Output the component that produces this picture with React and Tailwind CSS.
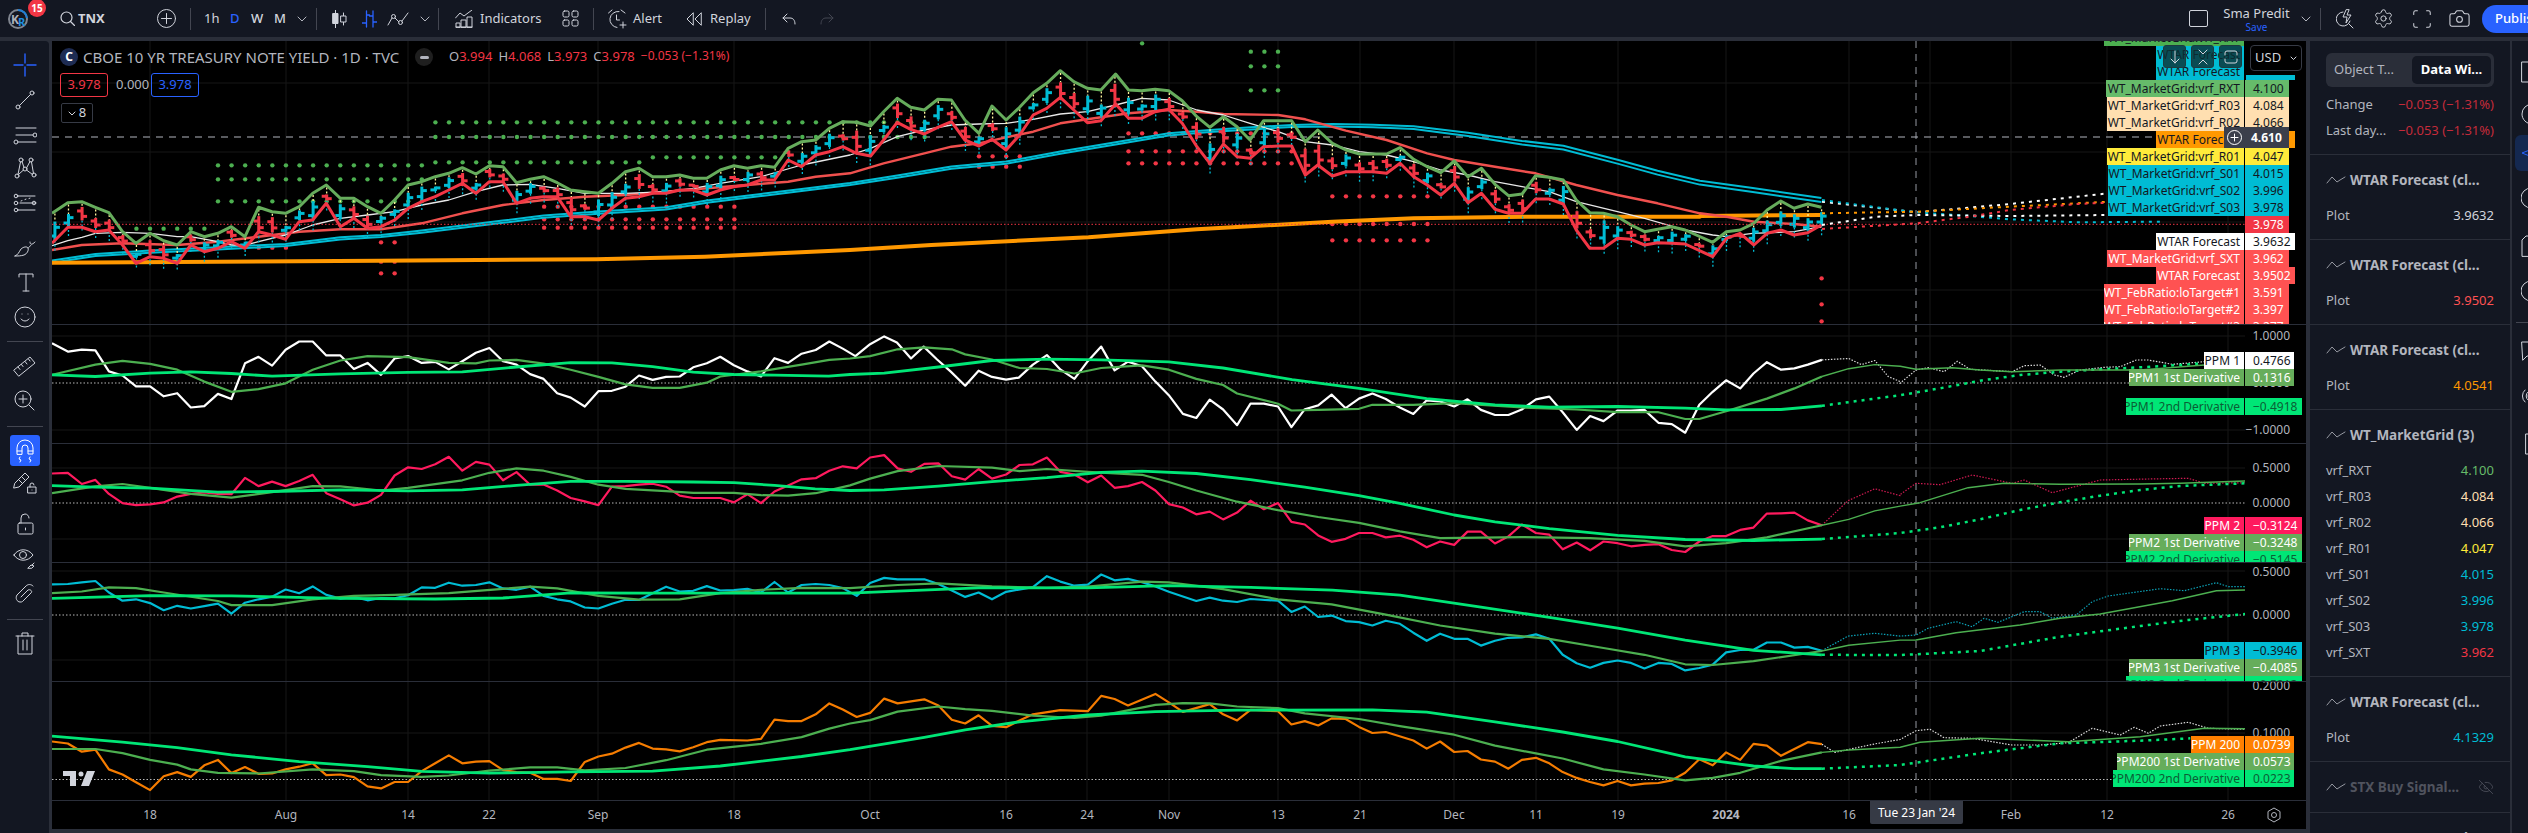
import React from 'react';
import { Settings, Camera, Scan, EyeOff, Smile } from 'lucide-react';

const Z1 = (x, y) => [x / 1.845, y / 3];
const Z2 = (x, y) => [850 + x / 1.845, y / 3];
const Z3 = (x, y) => [1700 + x / 1.894, y / 3];
const Z5 = (x, y) => [x / 1.845, 300 + y / 2.94];
const Z6 = (x, y) => [850 + x / 1.493, 300 + y / 2.94];
const Z4 = (x, y) => [1900 + x / 2.497, 320 + y / 3];
const Z7 = (x, y) => [1810 + x / 3, 180 + y / 3];
const P = (s, f) => s.trim().split(/\s+/).map((t) => { const [a, b] = t.split(',').map(Number); return f(a, b); });
const str = (a) => a.map((p) => p[0].toFixed(1) + ',' + p[1].toFixed(1)).join(' ');
const at = (a, x) => {
  for (let i = 1; i < a.length; i++) {
    if (x <= a[i][0]) {
      const t = (x - a[i - 1][0]) / Math.max(a[i][0] - a[i - 1][0], 0.01);
      return a[i - 1][1] + Math.max(0, t) * (a[i][1] - a[i - 1][1]);
    }
  }
  return a[a.length - 1][1];
};
const L = ({ p, c, w = 2, dash }) => (
  <polyline points={str(p)} fill="none" stroke={c} strokeWidth={w} strokeLinejoin="round" strokeDasharray={dash} />
);

const BX = (i) => 54.9 + 13.59 * i;
const GRIDX = [150, 286, 408, 489, 598, 734, 870, 1006, 1087, 1169, 1278, 1360, 1454, 1536, 1618, 1726, 1849, 1930, 2011, 2107, 2228];

/* ---------- main pane data ---------- */
const upper = [
  ...P('96,640 125,608 151,605 176,622 201,638 226,695 251,730 277,700 302,722 327,735 352,695 377,710 402,700 427,680 452,710 477,622 502,635 527,640 552,620 577,580 602,555 628,595 653,595 678,620 703,640 728,600 753,555 778,545 803,530 828,520 853,503 878,522 903,497 928,500 953,548 978,538 1003,530 1028,548 1053,570 1079,575 1104,580 1129,550 1154,515 1179,505 1204,530 1229,530 1254,525 1279,535 1304,535 1329,510 1354,497 1379,505 1404,497 1429,502 1454,445 1479,425 1505,420 1530,385 1555,365', Z1),
  ...P('12,367 38,378 62,335 87,295 112,322 137,330 162,298 187,300 212,360 238,400 262,318 288,360 313,322 338,278 363,250 388,212 413,245 438,265 463,270 490,222 514,270 538,272 563,268 588,272 613,302 640,350 664,382 689,350 714,380 738,420 763,362 790,362 815,362 840,425 863,390 890,430 915,450 940,462 965,462 990,462 1015,443 1040,478 1065,500 1090,518 1115,483 1140,530 1165,505 1190,553 1215,587 1240,582 1265,527 1290,532 1316,540 1340,600 1365,638 1390,640 1416,650 1441,675 1466,695 1490,688 1516,680 1541,690', Z2),
  ...P('24,727 50,695 76,690 102,670 127,630 153,603 178,625 204,612 230,622', Z3),
];
const lower = [
  ...P('96,730 125,682 151,682 176,695 201,690 226,735 251,790 277,770 302,775 327,790 352,735 377,755 402,745 427,725 452,745 477,695 502,705 527,718 552,665 577,660 602,610 628,680 653,655 678,685 703,680 728,660 753,625 778,605 803,590 828,570 853,550 878,580 903,545 928,545 953,610 978,595 1003,590 1028,590 1053,650 1079,650 1104,660 1129,625 1154,595 1179,590 1204,580 1229,580 1254,570 1279,570 1304,585 1329,570 1354,560 1379,555 1404,540 1429,540 1454,480 1479,500 1505,465 1530,455 1555,440', Z1),
  ...P('12,460 38,468 62,420 87,367 112,388 137,402 162,382 187,365 212,420 238,438 262,418 288,450 313,405 338,345 363,325 388,292 413,330 438,368 463,362 490,312 514,355 538,355 563,335 588,328 613,370 640,440 664,490 689,432 714,470 738,475 763,440 790,438 815,438 840,525 863,495 890,528 915,515 940,515 965,515 990,520 1015,490 1040,530 1065,555 1090,585 1115,550 1140,608 1165,580 1190,628 1215,640 1240,640 1265,597 1290,597 1316,612 1340,690 1365,745 1390,745 1416,715 1441,718 1466,735 1490,728 1516,730 1541,732', Z2),
  ...P('24,770 50,715 76,700 102,735 127,700 153,690 178,705 204,698 230,675', Z3),
];
const whiteMA = [
  ...P('96,737 125,722 151,712 176,700 226,697 277,700 327,710 352,710 402,725 427,735 452,735 477,725 527,705 577,675 628,655 678,645 728,635 778,615 828,600 878,575 928,555 978,553 1028,565 1079,580 1154,580 1229,575 1279,565 1329,550 1404,530 1479,495', Z1),
  ...P('0,465 38,445 87,410 137,390 187,375 238,372 288,370 338,358 388,342 438,335 490,315 538,295 588,300 640,330 689,345 738,370 790,395 840,425 890,435 940,455 990,465 1040,485 1090,510 1140,525 1190,545 1240,560 1290,575 1340,605 1416,635 1466,655 1541,690', Z2),
  ...P('24,705 50,710 100,700 178,695 230,680', Z3),
];
const redMA = [
  ...P('96,750 151,735 226,730 327,735 402,725 477,710 552,695 628,688 703,688 778,670 853,640 928,615 1003,600 1079,590 1154,585 1229,575 1304,565 1379,555 1454,545 1505,530', Z1),
  ...P('0,520 62,490 137,460 187,440 238,430 288,412 338,395 388,370 438,358 514,340 588,330 640,335 689,342 790,345 840,358 915,392 990,420 1065,460 1115,480 1190,500 1265,520 1340,555 1416,585 1490,610 1568,640', Z2),
  ...P('50,650 102,665 178,672 230,680', Z3),
];
const cyanMA = [
  ...P('96,785 176,765 277,755 402,745 527,735 628,715 703,708 778,695 853,680 928,665 1003,650 1104,638 1229,625 1304,605 1404,585 1479,570', Z1),
  ...P('0,552 87,530 187,503 288,488 388,458 490,430 588,403 664,393 740,385 815,378 890,376 965,378 1040,383 1140,403 1240,428 1316,443 1416,485 1490,518 1568,548', Z2),
  ...P('100,570 230,600', Z3),
];
const orangeMA = [
  ...P('96,788 400,785 700,782 1100,778 1300,770', Z1),
  ...P('0,750 150,735 440,712 640,688 890,665 1040,655 1265,650 1568,650', Z2),
  ...P('0,648 230,645', Z3),
];
const spread = (a, s) => a.map((p) => [p[0], p[1] + s * (1 + 0.8 * Math.min(1, Math.max(0, (p[0] - 1300) / 300)))]);

const COLORS = 'ccrrrrcrrcrccrcrrcccrcrrccccccrcrrccrrrrcccrrcrrccrcrcrcccr' + 'rccrrccrrcrccccrrccrcccrrrcrcrcrrrrrcrrrcrcrrccrrrrccrrccrrcccrccr';
const Bars = () => {
  const out = [];
  for (let i = 0; i <= 130; i++) {
    const x = BX(i);
    const g = at(upper, x);
    const r = at(lower, x);
    const gap = Math.max(r - g, 10);
    const v1 = 0.5 + 0.5 * Math.sin(i * 2.3);
    const v2 = 0.5 + 0.5 * Math.sin(i * 1.7 + 1);
    const top = g + gap * (0.2 + 0.3 * v1);
    const bot = g + gap * (0.72 + 0.32 * v2);
    const up = (COLORS[i] || 'c') === 'c';
    const col = up ? '#00bcd4' : '#f23645';
    const o = up ? top + (bot - top) * 0.75 : top + (bot - top) * 0.3;
    const cl = up ? top + (bot - top) * 0.3 : top + (bot - top) * 0.7;
    out.push(
      <g key={i}>
        <line x1={x} x2={x} y1={g + 2} y2={top} stroke="#fff59d" strokeWidth="1.3" strokeDasharray="2 2" />
        <line x1={x} x2={x} y1={bot} y2={bot + 12} stroke="#00bcd4" strokeWidth="1.3" strokeDasharray="2 2" />
        <line x1={x} x2={x} y1={top} y2={bot} stroke={col} strokeWidth="3" />
        <line x1={x - 5} x2={x} y1={o} y2={o} stroke={col} strokeWidth="3" />
        <line x1={x} x2={x + 5} y1={cl} y2={cl} stroke={col} strokeWidth="3" />
      </g>
    );
  }
  return <g>{out}</g>;
};

const dotRow = (y, a, b, c) => {
  const r = [];
  for (let i = a; i <= b; i++) r.push([BX(i), y / 3, c]);
  return r;
};
const G = '#4caf50';
const R = '#f23645';
const DOTS = [
  ...dotRow(367, 28, 64, G), ...dotRow(411, 28, 64, G), ...dotRow(487, 28, 43, G), ...dotRow(472, 44, 53, G),
  ...dotRow(496, 12, 27, G), ...dotRow(538, 12, 27, G), ...dotRow(604, 12, 27, G), ...dotRow(686, 6, 11, G),
  ...dotRow(130, 80, 80, G), ...dotRow(155, 88, 90, G), ...dotRow(199, 88, 90, G), ...dotRow(271, 88, 90, G),
  ...dotRow(620, 36, 50, R), ...dotRow(658, 36, 50, R), ...dotRow(683, 36, 50, R),
  ...dotRow(727, 24, 25, R), ...dotRow(785, 24, 25, R), ...dotRow(820, 24, 25, R),
  ...dotRow(743, 15, 17, R),
  ...dotRow(469, 68, 71, R), ...dotRow(500, 68, 71, R),
  ...dotRow(400, 79, 91, R), ...dotRow(454, 79, 91, R), ...dotRow(490, 79, 91, R),
  ...dotRow(589, 94, 101, R), ...dotRow(672, 94, 101, R), ...dotRow(721, 94, 101, R),
  ...dotRow(835, 130, 130, R), ...dotRow(913, 130, 130, R), ...dotRow(964, 130, 130, R),
];

const Grid = ({ ys, top, bottom }) => (
  <g>
    {GRIDX.map((x) => <line key={x} x1={x} x2={x} y1={top} y2={bottom} stroke="#171717" />)}
    {ys.map((y) => <line key={y} x1={52} x2={2245} y1={y} y2={y} stroke="#171717" />)}
    <line x1={1916} x2={1916} y1={top} y2={bottom} stroke="#9598a1" strokeDasharray="7 6" />
  </g>
);

const MainSvg = () => (
  <svg className="block h-[283px] w-[2193px] shrink-0" viewBox="52 41 2193 283">
    <Grid ys={[83, 152, 222, 290]} top={41} bottom={324} />
    <line x1={52} x2={2245} y1={137} y2={137} stroke="#b2b5be" strokeDasharray="7 6" />
    {DOTS.map((d, i) => <circle key={i} cx={d[0]} cy={d[1]} r="2.2" fill={d[2]} />)}
    <L p={spread(cyanMA, -1.1)} c="#00bcd4" w={2} />
    <L p={spread(cyanMA, 1.1)} c="#00bcd4" w={2} />
    <L p={orangeMA} c="#ff9800" w={4} />
    <L p={redMA} c="#f0504e" w={2.4} />
    <L p={whiteMA} c="#e8e8e8" w={1.3} />
    <Bars />
    <L p={upper} c="#66ac5c" w={3} />
    <L p={lower} c="#f23645" w={3} />
    <line x1={52} x2={2245} y1={224.3} y2={224.3} stroke="#f23645" strokeDasharray="1.5 2" />
    <L p={P('36,65 320,97 600,72 895,40', Z7)} c="#ffffff" w={2} dash="3 5" />
    <L p={P('36,60 200,82 320,97 480,108 600,118 800,127 1050,125', Z7)} c="#00bcd4" w={2} dash="3 5" />
    <L p={P('36,100 320,95 600,80 895,65', Z7)} c="#ff9800" w={2} dash="3 5" />
    <L p={P('36,135 200,110 320,105 600,108 895,105', Z7)} c="#ffffff" w={2} dash="3 5" />
    <L p={P('36,147 320,130 480,110 600,90 800,72 895,68', Z7)} c="#f23645" w={2} dash="3 5" />
  </svg>
);

/* ---------- lower panes data ---------- */
const PANES = [
  {
    top: 325, zero: 383, ys: [336, 430], c: '#ffffff',
    line: [...P('96,127 126,152 151,146 176,148 201,210 226,222 251,254 277,254 302,283 327,274 352,316 377,312 402,276 427,291 452,186 477,167 502,193 527,146 552,122 577,122 602,163 628,163 653,203 678,185 703,220 728,172 753,165 778,185 803,182 828,204 853,180 878,155 903,141 928,180 953,190 978,218 1003,232 1028,274 1053,287 1079,313 1104,268 1129,267 1154,255 1179,222 1204,235 1229,226 1254,225 1279,198 1304,186 1329,167 1354,192 1379,210 1404,225 1429,171 1454,185 1479,158 1505,147 1530,122 1555,143', Z5),
      ...P('8,165 30,130 51,107 70,125 91,172 110,137 130,175 150,210 172,252 192,208 212,226 233,234 252,228 273,190 294,162 314,204 335,232 355,180 375,137 395,207 415,181 436,195 456,240 476,280 497,335 517,347 537,293 557,322 578,368 598,305 618,305 639,313 659,374 679,321 699,310 719,278 740,318 760,290 780,275 800,291 821,316 841,335 861,295 881,298 902,313 922,292 942,323 963,338 983,338 1003,322 1024,292 1044,284 1064,330 1085,382 1105,341 1125,356 1146,325 1166,325 1186,323 1207,361 1227,365 1247,390 1268,308 1288,270 1308,236 1329,260 1349,216 1369,183 1390,205 1410,201 1430,190 1451,176', Z6)],
    mid: [...P('96,220 176,190 226,179 277,188 327,205 377,240 427,270 477,262 527,245 577,205 628,178 678,165 753,168 828,185 878,186 903,178 953,176 1003,187 1053,205 1104,226 1154,248 1204,258 1254,258 1304,243 1329,225 1404,210 1479,190 1530,176', Z5),
      ...P('0,172 30,165 71,145 111,139 152,145 172,160 212,175 253,200 294,203 335,216 375,200 436,192 476,205 517,232 557,250 578,275 639,305 659,325 699,323 760,320 780,308 841,308 902,303 1003,316 1085,322 1146,330 1207,330 1247,350 1268,350 1308,327 1369,290 1410,260 1451,225', Z6)],
    midF: [...P('1451,225 1491,202 1530,190 1568,195', Z6), ...P('40,148 130,143 200,150 280,155 400,150 600,150 760,135', Z4)],
    slow: [...P('96,220 176,225 277,215 352,211 427,216 502,224 628,217 753,213 853,211 953,197 1053,184 1129,185 1204,196 1279,212 1354,219 1429,221 1529,224', Z5),
      ...P('0,219 51,215 132,197 212,178 294,174 375,176 476,182 557,200 660,234 760,260 861,290 963,308 1044,315 1146,313 1247,318 1308,323 1390,322 1451,311', Z6)],
    slowF: [...P('1451,311 1568,280', Z6), ...P('100,205 200,182 300,165 400,155 500,148 600,142 700,135 755,130', Z4)],
    thin: [...P('1451,176 1491,172 1510,190 1530,178 1550,225 1568,240', Z6), ...P('0,190 40,150 70,143 110,155 143,124 175,148 280,155 310,137 350,135 385,165 410,172 450,150 510,142 550,140 590,120 620,120 680,133 760,125', Z4)],
    thinC: '#dcdcdc',
  },
  {
    top: 444, zero: 503, ys: [468, 539], c: '#ff1a5e',
    line: [...P('96,510 125,508 151,541 176,529 201,570 226,597 251,603 277,601 302,595 327,578 352,570 377,566 402,570 427,571 452,523 477,547 502,534 527,547 552,532 577,514 602,568 628,586 653,604 678,596 703,573 728,516 753,492 778,497 803,483 828,461 853,502 878,476 903,484 928,530 953,506 978,543 1003,542 1028,560 1053,582 1079,592 1104,603 1129,549 1154,547 1179,543 1204,540 1229,549 1254,575 1279,582 1304,582 1329,582 1354,595 1379,571 1404,597 1429,563 1454,545 1479,527 1505,524 1530,502 1555,489', Z5),
      ...P('10,495 30,463 51,456 71,495 91,505 111,482 132,480 152,518 172,528 192,497 212,525 233,513 253,485 273,483 294,463 314,505 335,513 355,536 375,516 395,552 415,547 436,535 456,560 476,600 497,610 517,630 537,622 557,645 578,625 598,590 618,615 639,597 659,652 679,660 699,692 719,711 740,702 760,685 780,685 800,698 821,693 841,705 861,727 881,710 902,720 922,681 942,681 963,716 983,695 1003,660 1024,685 1044,690 1064,733 1085,713 1105,736 1125,710 1146,715 1166,724 1186,720 1207,718 1227,735 1247,741 1268,710 1288,694 1308,694 1329,676 1349,669 1369,628 1390,627 1410,625 1430,648 1451,662', Z6)],
    mid: [...P('96,568 176,548 226,541 277,552 352,570 427,581 502,565 577,547 628,548 703,560 753,552 853,530 903,508 953,495 1003,502 1053,520 1104,543 1154,555 1229,562 1279,567 1354,567 1404,574 1454,575 1505,568', Z5),
      ...P('0,545 30,525 71,503 132,488 212,493 253,503 294,497 355,505 436,514 476,535 517,560 578,593 639,618 699,638 760,655 821,680 881,700 1003,697 1105,700 1186,708 1247,724 1308,715 1369,698 1451,662', Z6)],
    midF: [...P('1451,662 1491,645 1530,620 1568,606', Z6), ...P('50,548 170,503 260,490 400,493 600,492 700,490 862,483', Z4)],
    slow: [...P('96,546 176,550 277,553 402,565 502,563 628,558 753,561 853,558 953,545 1053,533 1154,533 1279,535 1354,537 1429,545 1504,555', Z5),
      ...P('0,560 51,558 132,547 212,534 294,522 375,507 436,503 517,510 598,528 679,550 760,575 821,598 902,632 963,652 1044,672 1146,692 1247,704 1349,707 1451,703', Z6)],
    slowF: [...P('1451,703 1568,685', Z6), ...P('100,622 200,598 300,570 400,547 500,527 600,510 700,498 860,490', Z4)],
    thin: [...P('1451,662 1490,590 1530,555 1568,575', Z6), ...P('0,524 40,490 100,494 180,465 280,490 310,480 380,518 500,480 620,477 720,475 760,490 862,488', Z4)],
    thinC: '#d01a52',
  },
  {
    top: 563, zero: 615, ys: [571, 660], c: '#00bcd4',
    line: [...P('96,836 125,835 151,830 176,826 201,860 226,884 251,880 277,891 302,912 327,899 352,907 377,900 402,893 427,922 452,890 477,880 502,872 527,851 552,862 577,842 602,867 628,878 653,873 678,883 703,876 728,877 753,868 778,845 803,846 828,831 853,840 878,838 903,830 928,848 953,852 978,843 1003,870 1028,880 1053,886 1079,904 1104,907 1129,893 1154,881 1179,882 1204,862 1229,843 1254,857 1279,855 1304,841 1329,854 1354,853 1379,849 1404,860 1429,829 1454,860 1479,838 1505,835 1530,838 1555,847', Z5),
      ...P('10,870 30,832 51,817 71,821 111,821 132,835 172,873 192,860 212,880 233,858 273,844 294,812 314,828 335,840 355,837 375,807 395,824 415,820 436,830 456,842 476,858 517,885 537,875 557,884 578,888 598,879 639,884 659,917 679,901 699,932 719,928 740,944 760,947 780,957 800,943 821,952 841,978 861,1002 881,981 902,996 922,996 942,1016 963,1002 983,993 1003,992 1024,983 1044,996 1064,1043 1085,1068 1105,1081 1125,1067 1146,1060 1166,1067 1186,1083 1207,1067 1227,1070 1247,1089 1268,1082 1288,1072 1308,1036 1329,1029 1349,1028 1369,1007 1390,1007 1410,1022 1430,1020 1451,1031', Z6)],
    mid: [...P('96,862 151,857 201,845 251,847 302,860 402,885 427,897 502,897 577,880 653,870 728,867 828,862 928,849 978,843 1028,848 1104,870 1179,881 1254,880 1329,862 1404,852 1479,846', Z5),
      ...P('0,847 71,838 132,833 212,842 294,846 355,843 436,828 476,830 557,850 639,880 719,895 800,925 881,957 963,981 1044,996 1125,1023 1186,1043 1247,1071 1288,1073 1349,1062 1451,1032', Z6)],
    midF: [...P('1451,1032 1491,1015 1568,1000', Z6), ...P('40,960 140,938 300,915 400,895 500,882 680,842 790,812 862,810', Z4)],
    slow: [...P('96,877 277,869 427,870 628,877 803,879 928,876 1053,861 1204,862 1404,862', Z5),
      ...P('0,862 71,856 192,846 355,846 476,840 598,845 720,853 821,868 942,903 1044,933 1146,965 1247,1000 1349,1030 1451,1043', Z6)],
    slowF: [...P('1451,1043 1568,1044', Z6), ...P('200,993 400,950 600,918 720,900 862,882', Z4)],
    thin: [...P('1451,1031 1490,988 1530,980 1568,988', Z6), ...P('40,945 70,925 140,905 180,920 210,895 245,907 310,875 350,875 380,895 440,885 480,845 520,828 650,806 710,812 790,788 820,800 862,800', Z4)],
    thinC: '#0ba3b8',
  },
  {
    top: 682, zero: 779.5, ys: [733], c: '#f57c00',
    line: [...P('96,1298 125,1304 151,1328 176,1322 201,1380 226,1395 251,1418 277,1441 302,1400 327,1388 352,1402 377,1368 402,1352 427,1391 452,1373 477,1393 502,1392 527,1380 552,1372 577,1362 602,1397 628,1395 653,1403 678,1430 703,1436 728,1417 753,1417 778,1385 803,1362 828,1339 853,1362 878,1357 903,1356 928,1382 953,1388 978,1390 1003,1408 1028,1408 1053,1414 1079,1358 1104,1342 1129,1334 1154,1316 1179,1302 1204,1319 1229,1321 1254,1327 1279,1315 1304,1300 1329,1293 1379,1295 1404,1290 1429,1234 1454,1238 1479,1238 1505,1218 1530,1186 1555,1204', Z5),
      ...P('10,1226 30,1214 51,1172 71,1186 111,1174 132,1192 152,1234 172,1245 192,1221 212,1252 233,1256 253,1236 273,1218 314,1206 355,1209 375,1164 395,1173 415,1192 456,1158 476,1183 497,1211 537,1188 557,1218 578,1236 598,1205 639,1209 659,1248 679,1238 699,1251 719,1230 740,1232 760,1255 780,1273 800,1270 841,1295 861,1319 881,1298 902,1329 922,1326 942,1351 963,1357 983,1378 1003,1352 1024,1346 1044,1362 1064,1388 1085,1405 1105,1417 1125,1427 1146,1414 1166,1427 1186,1422 1207,1420 1227,1412 1247,1390 1268,1350 1288,1368 1308,1330 1329,1352 1349,1305 1369,1310 1390,1340 1430,1300 1451,1306', Z6)],
    mid: [...P('96,1320 176,1320 226,1332 277,1352 327,1366 352,1380 402,1390 477,1392 577,1380 653,1385 703,1397 778,1402 828,1398 903,1384 978,1374 1028,1374 1079,1383 1154,1376 1229,1353 1304,1322 1404,1305 1479,1285 1530,1260', Z5),
      ...P('0,1245 30,1235 71,1210 132,1195 172,1203 212,1208 273,1222 335,1229 375,1222 456,1190 497,1185 537,1186 578,1195 639,1200 679,1215 760,1232 821,1253 902,1278 963,1310 1024,1333 1064,1348 1125,1380 1186,1395 1247,1412 1288,1405 1329,1390 1390,1355 1451,1330', Z6)],
    midF: [...P('1451,1330 1491,1323 1568,1315', Z6), ...P('50,1267 200,1255 420,1265 600,1250 760,1225 862,1226', Z4)],
    slow: [...P('96,1282 226,1300 327,1316 427,1337 552,1357 678,1372 778,1386 903,1391 1053,1387 1204,1385 1329,1370 1479,1342', Z5),
      ...P('0,1322 111,1286 172,1264 253,1240 355,1220 456,1210 578,1206 780,1205 861,1212 963,1240 1064,1270 1146,1298 1247,1343 1349,1370 1410,1378 1451,1378', Z6)],
    slowF: [...P('1451,1378 1568,1367', Z6), ...P('200,1300 400,1270 600,1262 725,1255', Z4)],
    thin: [...P('1451,1306 1470,1330 1530,1305 1568,1292', Z6), ...P('40,1232 75,1228 110,1253 180,1255 280,1275 350,1275 420,1268 480,1225 550,1245 585,1222 620,1240 650,1218 720,1207 770,1225 862,1228', Z4)],
    thinC: '#dcdcdc',
  },
];

const PaneSvg = ({ d }) => (
  <svg className="block h-[118px] w-[2193px] shrink-0" viewBox={`52 ${d.top} 2193 118`}>
    <Grid ys={d.ys} top={d.top} bottom={d.top + 118} />
    <line x1={52} x2={2245} y1={d.zero} y2={d.zero} stroke="#b8b8b8" strokeDasharray="1.5 2" />
    <L p={d.thin} c={d.thinC} w={1.2} dash="1.5 1.5" />
    <L p={d.slowF} c="#00e676" w={2.5} dash="3 5" />
    <L p={d.line} c={d.c} w={2.2} />
    <L p={d.mid} c="#4caf50" w={2.2} />
    <L p={d.midF} c="#4caf50" w={1.4} />
    <L p={d.slow} c="#00e676" w={2.8} />
  </svg>
);

/* ---------- price labels ---------- */
const PriceLabel = ({ pos, lw, vw, label, value, cls }) => (
  <div className={`absolute flex h-[17px] text-[12px] leading-[17px] whitespace-nowrap ${pos} ${cls}`}>
    {label ? <div className={`flex items-center justify-end overflow-hidden border-r border-black pr-[4px] ${lw}`}>{label}</div> : null}
    {value ? <div className={`overflow-hidden pl-[8px] ${vw}`}>{value}</div> : null}
  </div>
);
const AxisText = ({ pos, children }) => (
  <div className={`absolute right-[16px] h-[16px] text-[12px] leading-[16px] text-[#b2b5be] ${pos}`}>{children}</div>
);

const DK = 'text-[#131722]';
const MAIN_LABELS = [
  { pos: 'top-[-12px] right-[61px]', lw: 'w-[141px]', label: 'WT_MarketGrid:vrf_RXT', cls: `bg-[#4caf50] ${DK}` },
  { pos: 'top-[5px] right-[61px]', lw: 'w-[89px]', label: 'WTAR Forecast', cls: `bg-[#00bcd4] ${DK}` },
  { pos: 'top-[22px] right-[61px]', lw: 'w-[89px]', label: 'WTAR Forecast', cls: `bg-[#00bcd4] ${DK}` },
  { pos: 'top-[39px] right-[17px]', lw: 'w-[139px]', vw: 'w-[44px]', label: 'WT_MarketGrid:vrf_RXT', value: '4.100', cls: `bg-[#66bb6a] ${DK}` },
  { pos: 'top-[56px] right-[17px]', lw: 'w-[138px]', vw: 'w-[44px]', label: 'WT_MarketGrid:vrf_R03', value: '4.084', cls: `bg-[#ffdfb0] ${DK}` },
  { pos: 'top-[73px] right-[17px]', lw: 'w-[138px]', vw: 'w-[44px]', label: 'WT_MarketGrid:vrf_R02', value: '4.066', cls: `bg-[#ffdfb0] ${DK}` },
  { pos: 'top-[90px] right-[11px]', lw: 'w-[89px]', vw: 'w-[50px]', label: 'WTAR Forecast', value: '4.0541', cls: `bg-[#ff9800] ${DK}` },
  { pos: 'top-[107px] right-[17px]', lw: 'w-[138px]', vw: 'w-[44px]', label: 'WT_MarketGrid:vrf_R01', value: '4.047', cls: `bg-[#ffeb3b] ${DK}` },
  { pos: 'top-[124px] right-[17px]', lw: 'w-[137px]', vw: 'w-[44px]', label: 'WT_MarketGrid:vrf_S01', value: '4.015', cls: `bg-[#00bcd4] ${DK}` },
  { pos: 'top-[141px] right-[17px]', lw: 'w-[137px]', vw: 'w-[44px]', label: 'WT_MarketGrid:vrf_S02', value: '3.996', cls: `bg-[#00bcd4] ${DK}` },
  { pos: 'top-[158px] right-[17px]', lw: 'w-[137px]', vw: 'w-[44px]', label: 'WT_MarketGrid:vrf_S03', value: '3.978', cls: `bg-[#00bcd4] ${DK}` },
  { pos: 'top-[175px] right-[17px]', vw: 'w-[44px]', value: '3.978', cls: 'bg-[#f23645] text-white' },
  { pos: 'top-[192px] right-[11px]', lw: 'w-[89px]', vw: 'w-[50px]', label: 'WTAR Forecast', value: '3.9632', cls: `bg-white ${DK}` },
  { pos: 'top-[209px] right-[17px]', lw: 'w-[138px]', vw: 'w-[44px]', label: 'WT_MarketGrid:vrf_SXT', value: '3.962', cls: 'bg-[#ff5252] text-white' },
  { pos: 'top-[226px] right-[11px]', lw: 'w-[89px]', vw: 'w-[50px]', label: 'WTAR Forecast', value: '3.9502', cls: 'bg-[#ff5252] text-white' },
  { pos: 'top-[243px] right-[17px]', lw: 'w-[141px]', vw: 'w-[44px]', label: 'WT_FebRatio:loTarget#1', value: '3.591', cls: 'bg-[#ff5252] text-white' },
  { pos: 'top-[260px] right-[17px]', lw: 'w-[141px]', vw: 'w-[44px]', label: 'WT_FebRatio:loTarget#2', value: '3.397', cls: 'bg-[#ff5252] text-white' },
  { pos: 'top-[277px] right-[17px]', lw: 'w-[141px]', vw: 'w-[44px]', label: 'WT_FebRatio:loTarget#3', value: '3.277', cls: 'bg-[#ff5252] text-white' },
];
const GRN = 'bg-[#66ad5b] text-white';
const LIM = 'bg-[#00e676] text-[#0b5d35]';
const PANE_LABELS = [
  {
    axis: [['top-[3px]', '1.0000'], ['top-[50px]', '0.0000'], ['top-[97px]', '−1.0000']],
    rows: [
      { pos: 'top-[27px] right-[12px]', lw: 'w-[41px]', vw: 'w-[49px]', label: 'PPM 1', value: '0.4766', cls: `bg-white ${DK}` },
      { pos: 'top-[44px] right-[12px]', lw: 'w-[116px]', vw: 'w-[49px]', label: 'PPM1 1st Derivative', value: '0.1316', cls: GRN },
      { pos: 'top-[73px] right-[4px]', lw: 'w-[119px]', vw: 'w-[57px]', label: 'PPM1 2nd Derivative', value: '−0.4918', cls: LIM },
    ],
  },
  {
    axis: [['top-[16px]', '0.5000'], ['top-[51px]', '0.0000']],
    rows: [
      { pos: 'top-[73px] right-[4px]', lw: 'w-[41px]', vw: 'w-[57px]', label: 'PPM 2', value: '−0.3124', cls: 'bg-[#ff1a5e] text-white' },
      { pos: 'top-[90px] right-[4px]', lw: 'w-[116px]', vw: 'w-[57px]', label: 'PPM2 1st Derivative', value: '−0.3248', cls: GRN },
      { pos: 'top-[107px] right-[4px]', lw: 'w-[119px]', vw: 'w-[57px]', label: 'PPM2 2nd Derivative', value: '−0.5145', cls: LIM },
    ],
  },
  {
    axis: [['top-[1px]', '0.5000'], ['top-[44px]', '0.0000']],
    rows: [
      { pos: 'top-[79px] right-[4px]', lw: 'w-[41px]', vw: 'w-[57px]', label: 'PPM 3', value: '−0.3946', cls: `bg-[#00bcd4] ${DK}` },
      { pos: 'top-[96px] right-[4px]', lw: 'w-[116px]', vw: 'w-[57px]', label: 'PPM3 1st Derivative', value: '−0.4085', cls: GRN },
      { pos: 'top-[113px] right-[4px]', lw: 'w-[119px]', vw: 'w-[57px]', label: 'PPM3 2nd Derivative', value: '−0.5212', cls: LIM },
    ],
  },
  {
    axis: [['top-[-4px]', '0.2000'], ['top-[43px]', '0.1000']],
    rows: [
      { pos: 'top-[54px] right-[12px]', lw: 'w-[54px]', vw: 'w-[49px]', label: 'PPM 200', value: '0.0739', cls: 'bg-[#ff8000] text-white' },
      { pos: 'top-[71px] right-[12px]', lw: 'w-[128px]', vw: 'w-[49px]', label: 'PPM200 1st Derivative', value: '0.0573', cls: GRN },
      { pos: 'top-[88px] right-[12px]', lw: 'w-[132px]', vw: 'w-[49px]', label: 'PPM200 2nd Derivative', value: '0.0223', cls: LIM },
    ],
  },
];

/* ---------- icons ---------- */
const I = ({ w = 24, h = 24, children, stroke = '#d1d4dc', cls = '' }) => (
  <svg className={`block shrink-0 ${cls}`} width={w} height={h} viewBox={`0 0 ${w} ${h}`} fill="none" stroke={stroke} strokeWidth="1" strokeLinecap="round" strokeLinejoin="round">{children}</svg>
);
const Chev = ({ cls = '' }) => <I w={10} h={6} stroke="#b2b5be" cls={cls}><path d="M1 1l4 4 4-4" /></I>;
const Sep = ({ cls }) => <div className={`h-[22px] w-px shrink-0 bg-[#434651] ${cls}`} />;

const LEFT = [
  { m: 'mt-[12px]', i: <I><path d="M1 12h9M14 12h9M12 1v9M12 14v9" stroke="#2962ff" strokeWidth="1.4" /></I> },
  { m: 'mt-[11px]', i: <I><circle cx="5" cy="19" r="2" /><circle cx="19" cy="5" r="2" /><path d="M6.500 17.500L17.500 6.500" /></I> },
  { m: 'mt-[12px]', i: <I><path d="M3 4h20M3 11h17M6 18h17" /><circle cx="22" cy="11" r="2" /><circle cx="3" cy="18" r="2" /></I> },
  { m: 'mt-[8px]', i: <I><circle cx="4" cy="20" r="2" /><circle cx="8" cy="4" r="2" /><circle cx="12" cy="13" r="2" /><circle cx="18" cy="4" r="2" /><circle cx="21" cy="19" r="2" /><path d="M5 18.500L7.500 6M9 5.500L11 11.500M5.500 18.500L10.500 14M13.500 12L17 5.500M18.500 6L20.500 17.500M13.500 14L19.500 18.500" /></I> },
  { m: 'mt-[11px]', i: <I><path d="M4 5h18M7 12h15M5 19h17" /><circle cx="3" cy="5" r="1.800" /><circle cx="3" cy="12" r="1.800" /><circle cx="21" cy="12" r="1.800" /><circle cx="3" cy="19" r="1.800" /><path d="M8 10l1-.4M12 8.500l1-.4M16 7.500l1-.4" /></I> },
  { m: 'mt-[19px]', i: <I><path d="M2 22c3-1 4-4 6-7 2-2 6-3 7-1s-1 6-4 7c-3 1-6 1-9 1zM15 14c1 0 2-2 3-3M17 8c0 3 2 3 5 0" /></I> },
  { m: 'mt-[11px]', i: <I><path d="M6 8V5h14v3M13 5v17M10 22h6" /></I> },
  { m: 'mt-[12px]', i: <Smile size={24} strokeWidth={1} color="#d1d4dc" /> },
  { sep: 'mt-[12px]' },
  { m: 'mt-[11px]', i: <I><path d="M1 17L17 4l5 6L6 23zM5 14l2 2.500M8.500 11.500l1.500 2M12 8.500l2 2.500M15.500 6l1.500 2" /></I> },
  { m: 'mt-[11px]', i: <I><circle cx="10" cy="11" r="8" /><path d="M16 17l5 5M10 7v8M6 11h8" /></I> },
  { sep: 'mt-[14px]' },
  { magnet: true },
  { m: 'mt-[5px]', i: <I><path d="M2 12L12 2l4 4L6 16l-5 1zM6 9l3 3M9 6l3 3" /><rect x="15" y="16" width="8" height="6" /><path d="M17 16v-2a2 2 0 0 1 4 0" /><path d="M19 19v0" /></I> },
  { m: 'mt-[17px]', i: <I><rect x="5" y="11" width="15" height="11" rx="1.500" /><path d="M8 11V6a4 4 0 0 1 8 0M12.500 16v2" /></I> },
  { m: 'mt-[10px]', i: <I><path d="M1 9c4-7 14-7 19 0-5 7-15 7-19 0z" /><circle cx="10" cy="9" r="3.500" /><path d="M15 22l3-3 3 1-2 2zM21 17l-2 2" /></I> },
  { m: 'mt-[12px]', i: <I><path d="M20 4c-2-2-5-2-7 0L4 13c-2 3 0 7 3 7 2 0 2 0 3-1l8-8c2-2-1-4-3-3l-7 7" /></I> },
  { sep: 'mt-[13px]' },
  { m: 'mt-[11px]', i: <I><path d="M3 5h18M9 5V2h6v3M5 5v18h14V5M10 9v10M14 9v10" /></I> },
];

const LeftBar = () => (
  <div className="flex w-[49px] shrink-0 flex-col items-center rounded-tr-[4px] bg-[#131722]">
    {LEFT.map((it, idx) => {
      if (it.sep) return <div key={idx} className={`h-px w-[36px] shrink-0 bg-[#434651] ${it.sep}`} />;
      if (it.magnet)
        return (
          <div key={idx} className="mt-[8px] flex h-[31px] w-[30px] shrink-0 items-center justify-center rounded-[3px] bg-[#2962ff]">
            <I w={22} h={24} stroke="#ffffff"><path d="M3 15V9a8 8 0 0 1 16 0v6h-5V9a3 3 0 0 0-6 0v6zM3 12h5M14 12h5M6 18l-1 2 2 1-1 2M16 18l-1 2 2 1-1 2" /></I>
          </div>
        );
      return <div key={idx} className={`flex h-[24px] w-[24px] shrink-0 items-center justify-center ${it.m}`}>{it.i}</div>;
    })}
  </div>
);

const Header = () => (
  <div className="relative flex h-[37px] shrink-0 items-center bg-[#131722] text-[13px] text-[#d1d4dc] whitespace-nowrap">
    <svg className="ml-[7px] block shrink-0" width="22" height="24" viewBox="0 0 22 24" fill="none">
      <circle cx="11" cy="12" r="9" stroke="#80858f" strokeWidth="2" />
      <path d="M11 3a9 9 0 0 1 9 8" stroke="#1f7fd6" strokeWidth="2" />
      <text x="4" y="17" fontSize="12" fontWeight="700" fill="#aeb2ba" fontFamily="Noto Sans">K</text>
      <text x="11" y="19" fontSize="11" fontWeight="700" fill="#1f8fe0" fontFamily="Noto Sans">R</text>
    </svg>
    <div className="absolute left-[28px] top-[-1px] flex h-[18px] w-[18px] items-center justify-center rounded-full bg-[#f23645] text-[10px] font-bold text-white">15</div>
    <I w={15} h={15} cls="ml-[31px]"><circle cx="6.500" cy="6.500" r="5.500" strokeWidth="1.200" /><path d="M10.500 10.500L14.500 14.500" strokeWidth="1.200" /></I>
    <div className="ml-[3px] w-[26px] shrink-0 text-[13px] font-bold">TNX</div>
    <I w={19} h={19} cls="ml-[53px]"><circle cx="9.500" cy="9.500" r="9" /><path d="M9.500 4.500v10M4.500 9.500h10" /></I>
    <Sep cls="ml-[14px]" />
    <div className="ml-[13px] w-[14px] shrink-0">1h</div>
    <div className="ml-[12px] w-[9px] shrink-0 font-medium text-[#2962ff]">D</div>
    <div className="ml-[12px] w-[12px] shrink-0 font-medium">W</div>
    <div className="ml-[11px] w-[12px] shrink-0 font-medium">M</div>
    <Chev cls="ml-[11px]" />
    <Sep cls="ml-[9px]" />
    <I w={15} h={18} cls="ml-[15px]"><path d="M3.500 0v18M11.500 3v12" /><rect x="1" y="3.500" width="5" height="10" fill="#d1d4dc" /><rect x="9" y="6" width="5" height="6" fill="#131722" /></I>
    <I w={15} h={18} stroke="#2962ff" cls="ml-[15px]"><path d="M4.500 1v16M11 1v16M0 13h4.500M4.500 5h3M7.500 6h3.500M11 12h4" strokeWidth="1.300" /></I>
    <I w={22} h={14} cls="ml-[10px]"><path d="M1 13l4-7M8 6l4 4M15 9l6-8" /><circle cx="6.500" cy="4.500" r="2" /><circle cx="13.500" cy="10.500" r="2" /></I>
    <Chev cls="ml-[11px]" />
    <Sep cls="ml-[8px]" />
    <I w={18} h={18} cls="ml-[16px]"><path d="M0.500 8L5 3l4 3 8-6" /><path d="M1 17v-4h4v4zM6 17v-7h5v7zM12 17V7h5v10zM1 17h16" /></I>
    <div className="ml-[7px] w-[61px] shrink-0">Indicators</div>
    <I w={17} h={17} cls="ml-[21px]"><rect x="1" y="1" width="6" height="6" rx="1.500" /><rect x="10" y="1" width="6" height="6" rx="1.500" /><rect x="1" y="10" width="6" height="6" rx="1.500" /><rect x="10" y="10" width="6" height="6" rx="1.500" /></I>
    <Sep cls="ml-[14px]" />
    <I w={21} h={20} cls="ml-[13px]"><path d="M12 2.500a8 8 0 1 0-2 16M9.500 6v5h3M1.500 4L5 1M14 1l4 3M16 13v6M13 16h6" /></I>
    <div className="ml-[5px] w-[31px] shrink-0">Alert</div>
    <I w={16} h={14} cls="ml-[22px]"><path d="M7 1L1 7l6 6zM15 1L9 7l6 6z" /></I>
    <div className="ml-[8px] w-[41px] shrink-0">Replay</div>
    <Sep cls="ml-[14px]" />
    <I w={14} h={12} cls="ml-[16px]"><path d="M5 1L1 5l4 4M1 5h7c3 0 5 2 5 6" /></I>
    <I w={14} h={12} stroke="#434651" cls="ml-[24px]"><path d="M9 1l4 4-4 4M13 5H6c-3 0-5 2-5 6" /></I>

    <div className="ml-auto flex items-center">
      <div className="h-[17px] w-[19px] shrink-0 rounded-[2px] border border-[#d1d4dc]" />
      <div className="ml-[15px] flex w-[67px] shrink-0 flex-col items-center">
        <div className="text-[13px] leading-[17px]">Sma Predit</div>
        <div className="text-[10px] leading-[11px] text-[#2962ff]">Save</div>
      </div>
      <Chev cls="ml-[11px]" />
      <Sep cls="ml-[9px]" />
      <I w={18} h={20} cls="ml-[15px]"><path d="M7 3a7 7 0 1 0 7 9M13 15l4 4M10 1L7 8h4l-1 6 5-8h-4l2-5z" /></I>
      <div className="ml-[19px] shrink-0"><Settings size={21} strokeWidth={1.1} color="#d1d4dc" /></div>
      <div className="ml-[17px] shrink-0"><Scan size={22} strokeWidth={1.1} color="#d1d4dc" /></div>
      <div className="ml-[15px] shrink-0"><Camera size={23} strokeWidth={1.1} color="#d1d4dc" /></div>
      <div className="ml-[11px] flex h-[28px] w-[46px] shrink-0 items-center overflow-hidden rounded-l-full bg-[#2962ff] pl-[13px] text-[13px] font-medium text-white">Publish</div>
    </div>
  </div>
);

const Wave = () => <I w={20} h={8} stroke="#9598a1"><path d="M1 7l5-6 5 5 3-2 5-3" /></I>;

const Section = ({ title, value, color }) => (
  <div className="h-[85px] shrink-0 border-b border-[#2a2e39] px-[16px] pt-[14px]">
    <div className="flex h-[22px] items-center">
      <Wave />
      <div className="ml-[4px] text-[13.5px] font-bold text-[#b2b5be]">{title}</div>
    </div>
    <div className="mt-[14px] flex h-[22px] items-center justify-between text-[13px]">
      <span className="text-[#b2b5be]">Plot</span>
      <span className={color}>{value}</span>
    </div>
  </div>
);

const GRID_ROWS = [
  ['vrf_RXT', '4.100', 'text-[#66bb6a]'],
  ['vrf_R03', '4.084', 'text-[#ffdfb0]'],
  ['vrf_R02', '4.066', 'text-[#ffdfb0]'],
  ['vrf_R01', '4.047', 'text-[#ffeb3b]'],
  ['vrf_S01', '4.015', 'text-[#00bcd4]'],
  ['vrf_S02', '3.996', 'text-[#00bcd4]'],
  ['vrf_S03', '3.978', 'text-[#00bcd4]'],
  ['vrf_SXT', '3.962', 'text-[#f23645]'],
];

const Panel = () => (
  <div className="ml-[4px] flex w-[200px] shrink-0 flex-col overflow-hidden bg-[#131722] whitespace-nowrap">
    <div className="h-[114px] shrink-0 border-b border-[#2a2e39] px-[16px] pt-[12px] text-[13px]">
      <div className="flex h-[34px] items-center rounded-[6px] bg-[#2a2e39] pl-[8px] pr-[3px]">
        <div className="w-[78px] shrink-0 text-[#b2b5be]">Object T...</div>
        <div className="flex h-[28px] flex-1 items-center justify-center rounded-[5px] bg-[#131722] font-bold text-white">Data Wi...</div>
      </div>
      <div className="mt-[7px] flex h-[22px] items-center justify-between">
        <span className="text-[#b2b5be]">Change</span>
        <span className="text-[#c42b3a]">−0.053 (−1.31%)</span>
      </div>
      <div className="mt-[4px] flex h-[22px] items-center justify-between">
        <span className="text-[#b2b5be]">Last day...</span>
        <span className="text-[#c42b3a]">−0.053 (−1.31%)</span>
      </div>
    </div>
    <Section title="WTAR Forecast (cl..." value="3.9632" color="text-[#d1d4dc]" />
    <Section title="WTAR Forecast (cl..." value="3.9502" color="text-[#ff5252]" />
    <Section title="WTAR Forecast (cl..." value="4.0541" color="text-[#ff9800]" />
    <div className="h-[267px] shrink-0 border-b border-[#2a2e39] px-[16px] pt-[14px] text-[13px]">
      <div className="flex h-[22px] items-center">
        <Wave />
        <div className="ml-[4px] text-[13.5px] font-bold text-[#b2b5be]">WT_MarketGrid (3)</div>
      </div>
      <div className="mt-[12px] flex flex-col">
        {GRID_ROWS.map((r) => (
          <div key={r[0]} className="flex h-[26px] items-center justify-between">
            <span className="text-[#b2b5be]">{r[0]}</span>
            <span className={r[2]}>{r[1]}</span>
          </div>
        ))}
      </div>
    </div>
    <Section title="WTAR Forecast (cl..." value="4.1329" color="text-[#00bcd4]" />
    <div className="flex h-[51px] shrink-0 items-start border-b border-[#2a2e39] px-[16px] pt-[14px]">
      <div className="flex h-[22px] w-full items-center">
        <Wave />
        <div className="ml-[4px] flex-1 text-[13.5px] font-bold text-[#50535e]">STX Buy Signal...</div>
        <EyeOff size={16} strokeWidth={1.2} color="#50535e" />
      </div>
    </div>
    <div className="shrink-0 px-[16px] pt-[14px]">
      <div className="flex h-[22px] items-center">
        <Wave />
        <div className="ml-[4px] text-[13.5px] font-bold text-[#b2b5be]">WTAR Forecast (cl...</div>
      </div>
    </div>
  </div>
);

const RIGHT_ICONS = [
  { m: 'mt-[19px]', d: 'M1 2h20v20H1z' },
  { m: 'mt-[18px]', d: 'M11 2a10 10 0 0 0-10 10c0 5 4 10 10 10' },
  { active: true },
  { m: 'mt-[15px]', d: 'M10 2a10 10 0 0 0 0 20' },
  { m: 'mt-[24px]', d: 'M1 22V6l4-4h16v20z' },
  { m: 'mt-[21px]', d: 'M10 2a10 10 0 0 0 0 20' },
  { sep: true },
  { m: 'mt-[16px]', d: 'M1 3h20v14H6l-4 4z' },
  { m: 'mt-[21px]', d: 'M4 6a8 8 0 0 0 0 12M7 8a5 5 0 0 0 0 8M12 7a5 5 0 0 0 0 10' },
  { m: 'mt-[24px]', d: 'M5 2h16v20H5z' },
];
const RightBar = () => (
  <div className="ml-[2px] flex w-[16px] shrink-0 flex-col bg-[#131722]">
    {RIGHT_ICONS.map((r, i) => {
      if (r.sep) return <div key={i} className="ml-[4px] mt-[19px] h-px w-full shrink-0 bg-[#434651]" />;
      if (r.active)
        return (
          <div key={i} className="ml-[3px] mt-[9px] flex h-[36px] w-[13px] shrink-0 items-center overflow-hidden rounded-l-[6px] bg-[#142850] pl-[5px]">
            <I w={22} h={22} stroke="#2962ff" cls="shrink-0"><path d="M20 4L2 11l18 7" /></I>
          </div>
        );
      return <div key={i} className={`ml-[9px] h-[24px] w-[7px] shrink-0 overflow-hidden ${r.m}`}><I w={24} h={24} stroke="#d1d4dc"><path d={r.d} /></I></div>;
    })}
  </div>
);

const TIME = [
  [150, '18'], [286, 'Aug'], [408, '14'], [489, '22'], [598, 'Sep'], [734, '18'], [870, 'Oct'], [1006, '16'], [1087, '24'],
  [1169, 'Nov'], [1278, '13'], [1360, '21'], [1454, 'Dec'], [1536, '11'], [1618, '19'], [1726, '2024'], [1849, '16'],
  [2011, 'Feb'], [2107, '12'], [2228, '26'],
];

const Chart = () => (
  <div className="flex w-[2254px] shrink-0 flex-col self-start bg-black">
    {/* main pane */}
    <div className="relative flex h-[284px] shrink-0 overflow-hidden border-b border-[#2a2e39]">
      <MainSvg />
      <div className="w-[61px] shrink-0" />
      {MAIN_LABELS.map((r, i) => <PriceLabel key={i} {...r} />)}
      <div className="absolute right-[11px] top-[34px] h-[5px] w-[49px] bg-[#00bcd4]" />
      <div className="absolute right-[17px] top-[86px] flex h-[21px] w-[65px] items-center bg-[#3b3f4b]">
        <div className="ml-[3px] flex h-[15px] w-[15px] items-center justify-center rounded-full border border-white">
          <I w={9} h={9} stroke="#ffffff"><path d="M4.500 1v7M1 4.500h7" /></I>
        </div>
        <div className="pl-[9px] text-[12px] font-bold text-white">4.610</div>
      </div>
      {/* legend */}
      <div className="absolute left-[8px] top-[7px] flex h-[18px] items-center whitespace-nowrap text-[#b2b5be]">
        <div className="flex h-[18px] w-[18px] items-center justify-center rounded-full bg-[#1e2c53] text-[12px] font-bold text-white">C</div>
        <div className="ml-[5px] w-[317px] shrink-0 text-[15px]">CBOE 10 YR TREASURY NOTE YIELD · 1D · TVC</div>
        <div className="ml-[15px] flex h-[18px] w-[18px] items-center justify-center rounded-full bg-[#1f1f1f]">
          <div className="h-[3px] w-[9px] rounded-full bg-[#b2b5be]" />
        </div>
        <div className="ml-[16px] flex gap-[6px] text-[13px]">
          <span>O<span className="text-[#f23645]">3.994</span></span>
          <span>H<span className="text-[#f23645]">4.068</span></span>
          <span>L<span className="text-[#f23645]">3.973</span></span>
          <span>C<span className="text-[#f23645]">3.978</span></span>
          <span className="text-[12px] leading-[18px] text-[#f23645]">−0.053 (−1.31%)</span>
        </div>
      </div>
      <div className="absolute left-[8px] top-[32px] flex h-[24px] items-center text-[13px]">
        <div className="flex h-[24px] w-[48px] items-center justify-center rounded-[3px] border border-[#f23645] text-[#f23645]">3.978</div>
        <div className="ml-[8px] w-[27px] text-[#b2b5be]">0.000</div>
        <div className="ml-[8px] flex h-[24px] w-[48px] items-center justify-center rounded-[3px] border border-[#2962ff] text-[#2962ff]">3.978</div>
      </div>
      <div className="absolute left-[9px] top-[62px] flex h-[20px] w-[32px] items-center justify-center gap-[3px] rounded-[2px] border border-[#363a45] text-[13px] text-[#d1d4dc]">
        <I w={8} h={5} stroke="#d1d4dc"><path d="M1 1l3 3 3-3" /></I>8
      </div>
      {/* pane buttons */}
      <div className="absolute left-[2111px] top-[4px] flex gap-[5px]">
        <button className="flex h-[23px] w-[23px] items-center justify-center rounded-[3px] border border-[#1e3a3f] bg-[#0d2f33cc]">
          <I w={12} h={14} stroke="#d1d4dc"><path d="M6 1v12M2 9l4 4 4-4" /></I>
        </button>
        <button className="flex h-[23px] w-[23px] items-center justify-center rounded-[3px] border border-[#1e3a3f] bg-[#0d2f33cc]">
          <I w={12} h={16} stroke="#d1d4dc"><path d="M2 1l4 4 4-4M2 15l4-4 4 4" /></I>
        </button>
        <button className="flex h-[23px] w-[23px] items-center justify-center rounded-[3px] border border-[#1e3a3f] bg-[#0d2f33cc]">
          <I w={14} h={14} stroke="#d1d4dc"><path d="M1 5V3a2 2 0 0 1 2-2h8a2 2 0 0 1 2 2v2M1 9v2a2 2 0 0 0 2 2h8a2 2 0 0 0 2-2V9" /></I>
        </button>
      </div>
      <div className="absolute left-[2198px] top-[4px] flex h-[26px] w-[52px] items-center justify-between rounded-[4px] border border-[#363a45] bg-black px-[4px] text-[13px] text-[#d1d4dc]">
        USD
        <I w={7} h={5} stroke="#d1d4dc"><path d="M1 1l2.500 2.500L6 1" /></I>
      </div>
    </div>
    {/* lower panes */}
    {PANES.map((d, i) => (
      <div key={i} className="relative flex h-[119px] shrink-0 overflow-hidden border-b border-[#2a2e39]">
        <PaneSvg d={d} />
        <div className="w-[61px] shrink-0" />
        {PANE_LABELS[i].axis.map((a) => <AxisText key={a[1]} pos={a[0]}>{a[1]}</AxisText>)}
        {PANE_LABELS[i].rows.map((r, j) => <PriceLabel key={j} {...r} />)}
        {i === 3 ? (
          <svg className="absolute left-[10px] top-[88px]" width="34" height="18" viewBox="0 0 34 18">
            <path d="M1 1h13v15H8V6H1z" fill="#d1d4dc" />
            <circle cx="19" cy="4" r="2.500" fill="#d1d4dc" />
            <path d="M25 1h8l-6 15h-8z" fill="#d1d4dc" />
          </svg>
        ) : null}
      </div>
    ))}
    {/* time axis */}
    <div className="relative h-[28px] shrink-0 text-[12px] text-[#b2b5be]">
      {TIME.map((t) => (
        <div key={t[0] + t[1]} className={`absolute top-[5px] -translate-x-1/2 leading-[18px] ${t[1] === '2024' ? 'font-bold' : ''}`} style={{ left: t[0] - 52 }}>{t[1]}</div>
      ))}
      <div className="absolute left-[1818px] top-0 flex h-[23px] w-[93px] items-center justify-center rounded-b-[2px] bg-[#363a45] text-white">Tue 23 Jan '24</div>
      <svg className="absolute left-[2214px] top-[6px]" width="16" height="16" viewBox="0 0 16 16" fill="none" stroke="#b2b5be">
        <path d="M8 1l6 3.500v7L8 15l-6-3.500v-7z" />
        <circle cx="8" cy="8" r="2.500" />
      </svg>
    </div>
  </div>
);

export default function App() {
  return (
    <div className="flex h-[833px] w-[2528px] flex-col overflow-hidden bg-[#2a2e39] font-['Noto_Sans',sans-serif]">
      <Header />
      <div className="mt-[4px] flex min-h-0 flex-1">
        <LeftBar />
        <div className="ml-[3px] flex shrink-0">
          <Chart />
        </div>
        <Panel />
        <RightBar />
      </div>
    </div>
  );
}
